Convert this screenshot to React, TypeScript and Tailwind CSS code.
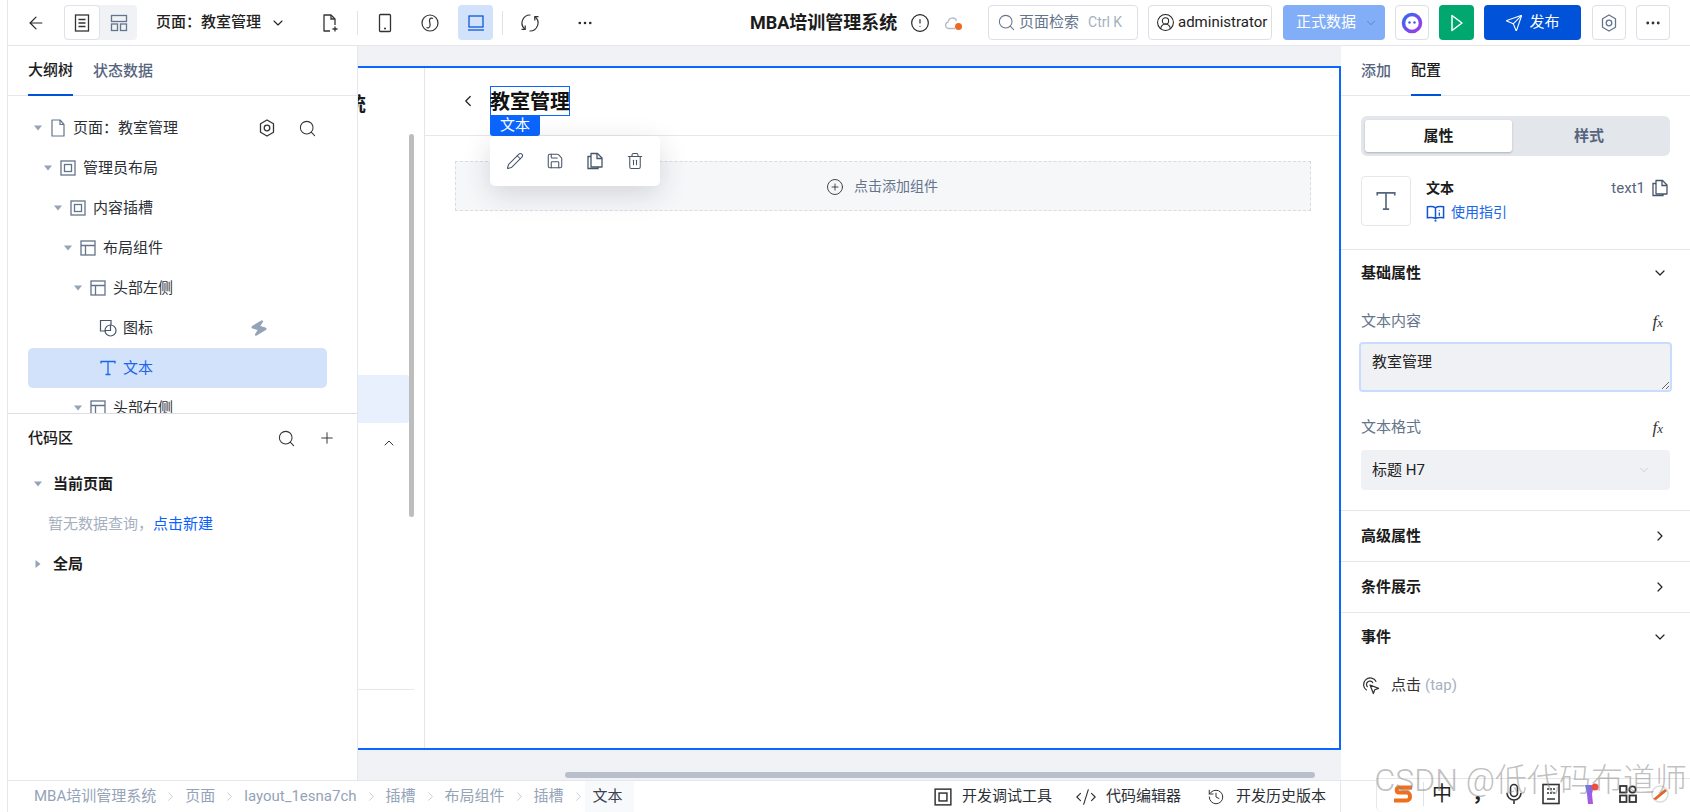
import {
  ArrowLeft,
  ChevronDown,
  ChevronLeft,
  ChevronRight,
  ChevronUp,
  CircleAlert,
  CirclePlus,
  CircleUserRound,
  CodeXml,
  Ellipsis,
  History,
  Pencil,
  Plus,
  Save,
  Search,
  Send,
  Trash2,
  Zap,
} from 'lucide-react'

const fontStack = 'font-[Roboto,"Noto_Sans_CJK_SC",sans-serif]'

function Hex({ className = '' }: { className?: string }) {
  return (
    <svg viewBox="0 0 20 20" fill="none" stroke="currentColor" strokeWidth="1.3" className={className}>
      <path d="M10 2l6.500 3.700v8.600L10 18l-6.500-3.700V5.700z" strokeLinejoin="round" />
      <circle cx="10" cy="10" r="2.800" />
    </svg>
  )
}

function DocIcon({ className = '' }: { className?: string }) {
  return (
    <svg viewBox="0 0 16 18" fill="none" stroke="currentColor" strokeWidth="1.2" className={className}>
      <path d="M2 1h8l4 4.500V17H2z" strokeLinejoin="round" />
      <path d="M10 1v4.500h4" />
    </svg>
  )
}

function CopyIcon({ className = '' }: { className?: string }) {
  return (
    <svg viewBox="0 0 18 18" fill="none" stroke="currentColor" strokeWidth="1.3" className={className}>
      <path d="M5 1.500h6.500L16 6v9H5z" strokeLinejoin="round" />
      <path d="M11 1.500V6.500h5" />
      <path d="M5 4.500H2v12h10V15" />
    </svg>
  )
}

function SlotIcon({ className = '' }: { className?: string }) {
  return (
    <svg viewBox="0 0 16 16" fill="none" stroke="currentColor" strokeWidth="1.3" className={className}>
      <rect x="1" y="1" width="14" height="14" />
      <rect x="4.500" y="4.500" width="7" height="7" />
    </svg>
  )
}

function LayoutIcon({ className = '' }: { className?: string }) {
  return (
    <svg viewBox="0 0 16 16" fill="none" stroke="currentColor" strokeWidth="1.3" className={className}>
      <rect x="1" y="1" width="14" height="14" />
      <path d="M1 5.500h14M5.500 5.500V15" />
    </svg>
  )
}

function ShapeIcon({ className = '' }: { className?: string }) {
  return (
    <svg viewBox="0 0 18 18" fill="none" stroke="currentColor" strokeWidth="1.2" className={className}>
      <path d="M7 12H1.500V1.500H12V6" />
      <circle cx="11.500" cy="11.500" r="5.500" />
      <path d="M6 11.500h5.500V6" />
    </svg>
  )
}

function TIcon({ className = '' }: { className?: string }) {
  return (
    <svg viewBox="0 0 16 16" fill="none" stroke="currentColor" strokeWidth="1.3" className={className}>
      <path d="M1 3.500V1.500h14v2M8 1.500v13M5.500 14.500h5" />
    </svg>
  )
}

function Caret({ open = true }: { open?: boolean }) {
  return (
    <svg viewBox="0 0 8 8" className={`h-[8px] w-[8px] shrink-0 fill-[#94a3b8] ${open ? '' : '-rotate-90'}`}>
      <path d="M0 1.500h8L4 6.500z" />
    </svg>
  )
}

function FxMark() {
  return (
    <span className="mr-[7px] font-['Liberation_Serif'] text-[17px] italic leading-none text-[#333]">
      f<span className="text-[13px]">x</span>
    </span>
  )
}

const treeRows = [
  { label: '页面：教室管理', pad: 'pl-[6px]', icon: 'doc' },
  { label: '管理员布局', pad: 'pl-[16px]', icon: 'slot' },
  { label: '内容插槽', pad: 'pl-[26px]', icon: 'slot' },
  { label: '布局组件', pad: 'pl-[36px]', icon: 'layout' },
  { label: '头部左侧', pad: 'pl-[46px]', icon: 'layout' },
  { label: '图标', pad: 'pl-[71px]', icon: 'shape' },
  { label: '文本', pad: 'pl-[72px]', icon: 'text', active: true },
  { label: '头部右侧', pad: 'pl-[46px]', icon: 'layout' },
]

function TreeIcon({ kind }: { kind: string }) {
  if (kind === 'doc') return <DocIcon className="h-[18px] w-[16px] text-[#64748b]" />
  if (kind === 'slot') return <SlotIcon className="h-[16px] w-[16px] text-[#64748b]" />
  if (kind === 'layout') return <LayoutIcon className="h-[16px] w-[16px] text-[#64748b]" />
  if (kind === 'shape') return <ShapeIcon className="h-[18px] w-[18px] text-[#475569]" />
  return <TIcon className="h-[16px] w-[16px] text-[#1a66e8]" />
}

function TopBar() {
  return (
    <div className="flex h-[46px] shrink-0 items-center border-b border-[#e5e7eb] text-[#222]">
      <ArrowLeft strokeWidth={1.4} className="ml-[18px] h-[20px] w-[20px]" />
      <div className="ml-[18px] flex h-[35px] w-[73px] rounded-[4px] bg-[#f0f2f6]">
        <div className="flex w-[36px] items-center justify-center rounded-[4px] border border-[#dfe2e8] bg-white">
          <svg viewBox="0 0 16 18" fill="none" stroke="#333" strokeWidth="1.3" className="h-[18px] w-[16px]">
            <rect x="1.500" y="1" width="13" height="16" />
            <path d="M4.500 5.500h7M4.500 9h7M4.500 12.500h7" />
          </svg>
        </div>
        <div className="flex flex-1 items-center justify-center">
          <svg viewBox="0 0 18 18" fill="none" stroke="#64748b" strokeWidth="1.3" className="h-[18px] w-[18px]">
            <rect x="1.500" y="1.500" width="15" height="6" />
            <rect x="1.500" y="10" width="6" height="6.500" />
            <rect x="10.500" y="10" width="6" height="6.500" />
          </svg>
        </div>
      </div>
      <span className="ml-[19px] w-[105px] whitespace-nowrap text-[15px] font-medium">页面：教室管理</span>
      <ChevronDown strokeWidth={1.6} className="ml-[9px] h-[16px] w-[16px]" />
      <svg viewBox="0 0 18 20" fill="none" stroke="#333" strokeWidth="1.3" className="ml-[35px] h-[20px] w-[18px]">
        <path d="M9 18H3V2h7l4 4v6" strokeLinejoin="round" />
        <path d="M10 2v4h4M14 13.500v5M11.500 16h5" />
      </svg>
      <div className="ml-[18px] h-[24px] w-px bg-[#dfe2e8]" />
      <svg viewBox="0 0 18 20" fill="none" stroke="#333" strokeWidth="1.3" className="ml-[18px] h-[20px] w-[18px]">
        <rect x="3.500" y="1.500" width="11" height="17" rx="1" />
        <path d="M8 15.500h2" />
      </svg>
      <svg viewBox="0 0 18 18" fill="none" stroke="#333" strokeWidth="1.2" className="ml-[27px] h-[18px] w-[18px]">
        <circle cx="9" cy="9" r="8" />
        <path d="M12 4.500c-2-1-3.500 0-3.500 2 0 2.500 1 3 .5 5.500-.4 1.800-2 2.200-3.500 1.500" />
      </svg>
      <div className="ml-[19px] flex h-[35px] w-[35px] items-center justify-center rounded-[4px] bg-[#d2e2fb]">
        <svg viewBox="0 0 18 18" fill="none" stroke="#0b5ad9" strokeWidth="1.3" className="h-[18px] w-[18px]">
          <rect x="2" y="2" width="14" height="11" />
          <path d="M1 16h16" />
        </svg>
      </div>
      <div className="ml-[9px] h-[24px] w-px bg-[#dfe2e8]" />
      <svg viewBox="0 0 20 20" fill="none" stroke="#333" strokeWidth="1.2" className="ml-[17px] h-[20px] w-[20px]">
        <path d="M10.500 2A8 8 0 0 0 5 16.200M9.500 18A8 8 0 0 0 15 3.800" />
        <path d="M5.200 12.500V16.400H1.500M14.800 7.500V3.600H18.500" />
      </svg>
      <Ellipsis strokeWidth={1.5} className="ml-[36px] h-[18px] w-[18px]" />
      <span className="ml-[156px] w-[146px] whitespace-nowrap text-[18px] font-bold text-[#1b1b1b]">MBA培训管理系统</span>
      <CircleAlert strokeWidth={1.4} className="ml-[14px] h-[20px] w-[20px]" />
      <div className="relative ml-[14px] h-[18px] w-[18px]">
        <svg viewBox="0 0 18 18" fill="none" stroke="#b4bcc8" strokeWidth="1.3" className="h-[18px] w-[18px]">
          <path d="M11 14.500H4.500a3.200 3.200 0 0 1-.5-6.300 4.500 4.500 0 0 1 8.600-1.500" />
        </svg>
        <div className="absolute bottom-[2px] right-[0px] h-[7px] w-[7px] rounded-full bg-[#ed6a24]" />
      </div>
      <div className="ml-[26px] flex h-[35px] w-[150px] items-center rounded-[4px] border border-[#dcdfe6] pl-[8px] text-[15px] text-[#64748b]">
        <Search strokeWidth={1.3} className="h-[19px] w-[19px]" />
        <span className="ml-[3px] whitespace-nowrap">页面检索</span>
        <span className="ml-[9px] whitespace-nowrap text-[14px] text-[#a6b0bf]">Ctrl K</span>
      </div>
      <div className="ml-[10px] flex h-[35px] w-[124px] items-center rounded-[4px] border border-[#dcdfe6] pl-[7px] text-[15px] text-[#222]">
        <CircleUserRound strokeWidth={1.3} className="h-[19px] w-[19px]" />
        <span className="ml-[3px]">administrator</span>
      </div>
      <div className="ml-[11px] flex h-[35px] w-[102px] items-center rounded-[4px] bg-[#82aef7] pl-[13px] text-[15px] text-white">
        正式数据
        <ChevronDown strokeWidth={1.5} className="ml-[8px] h-[14px] w-[14px] text-[#5b7fb8]" />
      </div>
      <div className="ml-[10px] flex h-[35px] w-[34px] items-center justify-center rounded-[4px] border border-[#dcdfe6]">
        <svg viewBox="0 0 22 22" className="h-[22px] w-[22px]">
          <defs>
            <linearGradient id="bot" x1="0" y1="0" x2="1" y2="1">
              <stop offset="0" stopColor="#2f6bf2" />
              <stop offset="1" stopColor="#a638e8" />
            </linearGradient>
          </defs>
          <circle cx="11" cy="11" r="8.500" fill="none" stroke="url(#bot)" strokeWidth="3.500" />
          <circle cx="8.500" cy="10.500" r="1.200" fill="#4057d8" />
          <circle cx="13.500" cy="10.500" r="1.200" fill="#4057d8" />
        </svg>
      </div>
      <div className="ml-[10px] flex h-[35px] w-[35px] items-center justify-center rounded-[4px] bg-[#00a870]">
        <svg viewBox="0 0 14 18" fill="none" stroke="white" strokeWidth="1.5" className="h-[18px] w-[14px]">
          <path d="M2 1.500l10 7.500-10 7.500z" strokeLinejoin="round" />
        </svg>
      </div>
      <div className="ml-[10px] flex h-[35px] w-[97px] items-center justify-center gap-[6px] rounded-[4px] bg-[#0052d9] text-[15px] text-white">
        <Send strokeWidth={1.4} className="h-[18px] w-[18px]" />
        发布
      </div>
      <div className="ml-[11px] flex h-[35px] w-[34px] items-center justify-center rounded-[4px] border border-[#dcdfe6]">
        <Hex className="h-[20px] w-[20px] text-[#64748b]" />
      </div>
      <div className="ml-[10px] flex h-[35px] w-[34px] items-center justify-center rounded-[4px] border border-[#dcdfe6]">
        <Ellipsis strokeWidth={1.8} className="h-[18px] w-[18px] text-[#333]" />
      </div>
    </div>
  )
}

function LeftPanel() {
  return (
    <div className="flex w-[350px] shrink-0 flex-col border-r border-[#e5e7eb]">
      <div className="flex h-[50px] shrink-0 gap-[20px] border-b border-[#e5e7eb] pl-[20px] text-[15px]">
        <div className="-mb-px flex items-center border-b-2 border-[#0052d9] font-medium text-[#1b1b1b]">大纲树</div>
        <div className="-mb-px flex items-center font-medium text-[#56657e]">状态数据</div>
      </div>
      <div className="h-[317px] shrink-0 overflow-hidden px-[20px] pt-[12px]">
        {treeRows.map((row) => (
          <div
            key={row.label}
            className={`flex h-[40px] w-[299px] items-center rounded-[5px] text-[15px] ${row.pad} ${
              row.active ? 'bg-[#d2e2fb] text-[#1a66e8]' : 'text-[#2b2f36]'
            }`}
          >
            {row.icon === 'shape' || row.icon === 'text' ? null : <Caret />}
            <span className={row.icon === 'shape' || row.icon === 'text' ? '' : 'ml-[8px]'}>
              <TreeIcon kind={row.icon} />
            </span>
            <span className={row.icon === 'shape' ? 'ml-[6px]' : 'ml-[7px]'}>{row.label}</span>
            {row.icon === 'doc' && (
              <span className="ml-[79px] flex items-center gap-[21px] text-[#333]">
                <Hex className="h-[20px] w-[20px]" />
                <Search strokeWidth={1.3} className="h-[19px] w-[19px]" />
              </span>
            )}
            {row.icon === 'shape' && (
              <Zap className="ml-[97px] h-[18px] w-[18px] rotate-[15deg] fill-[#94a3b8] text-[#94a3b8]" />
            )}
          </div>
        ))}
      </div>
      <div className="flex-1 border-t border-[#dcdfe6] px-[20px]">
        <div className="flex h-[48px] items-center justify-between pr-[1px] text-[15px] font-medium text-[#1b1b1b]">
          代码区
          <span className="flex items-center gap-[22px] text-[#333]">
            <Search strokeWidth={1.3} className="h-[19px] w-[19px]" />
            <Plus strokeWidth={1.3} className="h-[18px] w-[18px]" />
          </span>
        </div>
        <div className="mt-[2px] flex h-[40px] items-center pl-[6px] text-[15px] font-bold text-[#1b1b1b]">
          <Caret />
          <span className="ml-[11px]">当前页面</span>
        </div>
        <div className="flex h-[40px] items-center pl-[20px] text-[15px] text-[#a6b0bf]">
          暂无数据查询，<span className="text-[#0a5fff]">点击新建</span>
        </div>
        <div className="flex h-[40px] items-center pl-[6px] text-[15px] font-bold text-[#1b1b1b]">
          <Caret open={false} />
          <span className="ml-[11px]">全局</span>
        </div>
      </div>
    </div>
  )
}

function Canvas() {
  return (
    <div className="flex w-[983px] shrink-0 flex-col bg-[#f0f2f6] pt-[20px]">
      <div className="flex h-[684px] shrink-0 border-y-2 border-r-2 border-[#0a66ff] bg-white">
        <div className="relative w-[67px] shrink-0 overflow-hidden border-r border-[#e5e5e5]">
          <div className="mt-[25px] h-[24px] w-[8px] overflow-hidden">
            <div className="-ml-[12px] text-[20px] font-bold leading-[24px] text-[#1b1b1b]">统</div>
          </div>
          <div className="mt-[258px] h-[48px] w-[51px] rounded-r-[3px] bg-[#e8effd]" />
          <div className="mt-[12px] flex w-[56px] justify-end pr-[17px]">
            <ChevronUp strokeWidth={1.5} className="h-[16px] w-[16px] text-[#333]" />
          </div>
          <div className="mt-[238px] w-[56px] border-t border-[#e5e7eb]" />
          <div className="absolute left-[51px] top-[66px] h-[383px] w-[5px] rounded-full bg-[#bdbdbd]" />
        </div>
        <div className="flex-1">
          <div className="flex h-[68px] items-center border-b border-[#e5e7eb] pb-[2px] pl-[34px]">
            <ChevronLeft strokeWidth={1.6} className="h-[18px] w-[18px] text-[#222]" />
            <div className="relative ml-[13px] flex h-[30px] w-[80px] items-center justify-center whitespace-nowrap border border-[#0a66ff] text-[20px] font-bold text-[#111]">
              <span className="translate-y-[1px]">教室管理</span>
              <div className="absolute -left-px top-[29px] z-10 flex h-[20px] w-[50px] items-center justify-center rounded-b-[3px] bg-[#0a66ff] text-[15px] font-normal text-white">
                文本
              </div>
              <div className="absolute -left-px top-[49px] z-10 flex h-[50px] w-[170px] items-center gap-[22px] rounded-[5px] bg-white pl-[16px] text-[#475569] shadow-[0_8px_28px_rgba(30,40,60,0.16)]">
                <Pencil strokeWidth={1.4} className="h-[18px] w-[18px]" />
                <Save strokeWidth={1.4} className="h-[18px] w-[18px]" />
                <CopyIcon className="h-[18px] w-[18px]" />
                <Trash2 strokeWidth={1.4} className="h-[18px] w-[18px]" />
              </div>
            </div>
          </div>
          <div className="ml-[30px] mr-[28px] mt-[25px] flex h-[50px] items-center justify-center gap-[10px] border border-dashed border-[#dcdcdc] bg-[#f6f7f9] pr-[2px] pt-[1px] text-[14px] text-[#64748b]">
            <CirclePlus strokeWidth={1.2} className="h-[18px] w-[18px] text-[#333]" />
            点击添加组件
          </div>
        </div>
      </div>
      <div className="flex h-[30px] items-end pb-[2px] pl-[207px]">
        <div className="h-[6px] w-[750px] rounded-full bg-[#b8bfca]" />
      </div>
    </div>
  )
}

function SectionHeader({ label, open }: { label: string; open?: boolean }) {
  return (
    <div className="flex h-[46px] items-center justify-between px-[20px] text-[15px] font-bold text-[#1b1b1b]">
      {label}
      {open ? (
        <ChevronDown strokeWidth={1.8} className="mr-[2px] h-[16px] w-[16px] text-[#222]" />
      ) : (
        <ChevronRight strokeWidth={1.8} className="mr-[2px] h-[16px] w-[16px] text-[#222]" />
      )}
    </div>
  )
}

function RightPanel() {
  return (
    <div className="flex w-[349px] shrink-0 flex-col">
      <div className="flex h-[50px] shrink-0 gap-[20px] border-b border-[#e5e7eb] pl-[20px] text-[15px] font-medium">
        <div className="-mb-px flex items-center text-[#56657e]">添加</div>
        <div className="-mb-px flex items-center border-b-2 border-[#0052d9] text-[#1b1b1b]">配置</div>
      </div>
      <div className="border-b border-[#e5e7eb] px-[20px] pb-[23px] pt-[20px]">
        <div className="flex h-[40px] w-[309px] rounded-[6px] bg-[#e3e6ea] p-[4px] text-[15px] font-bold">
          <div className="flex w-[147px] items-center justify-center rounded-[3px] bg-white text-[#1b1b1b] shadow-[0_1px_2px_rgba(50,60,80,0.3)]">
            属性
          </div>
          <div className="flex flex-1 items-center justify-center text-[#56657e]">样式</div>
        </div>
        <div className="mt-[20px] flex h-[50px]">
          <div className="flex h-[50px] w-[50px] items-center justify-center rounded-[4px] border border-[#e5e7eb]">
            <TIcon className="h-[20px] w-[20px] text-[#56657e]" />
          </div>
          <div className="ml-[15px] flex-1">
            <div className="flex items-center justify-between">
              <span className="text-[14px] font-bold leading-[24px] text-[#1b1b1b]">文本</span>
              <span className="flex items-center text-[15px] text-[#56657e]">
                text1
                <CopyIcon className="ml-[6px] mr-[1px] h-[18px] w-[18px] text-[#475569]" />
              </span>
            </div>
            <div className="mt-[2px] flex items-center text-[14px] text-[#1a66e8]">
              <svg viewBox="0 0 20 18" className="h-[18px] w-[19px]" fill="none" stroke="#1256cf" strokeWidth="1.6">
                <path d="M10 3.500C8 2 5 2 1.500 2.500v11.500c3.500-.5 6.500-.5 8.500 1 2-1.500 5-1.500 8.500-1V2.500C15 2 12 2 10 3.500zM10 3.500V15" />
                <path d="M14 6v.8M14 8.500v3.500" strokeWidth="1.400" />
                <path d="M9 17.200h2" />
              </svg>
              <span className="ml-[6px]">使用指引</span>
            </div>
          </div>
        </div>
      </div>
      <div className="border-b border-[#e5e7eb] pb-[20px]">
        <SectionHeader label="基础属性" open />
        <div className="mt-[15px] flex h-[20px] items-center justify-between px-[20px] text-[15px] text-[#64748b]">
          文本内容
          <FxMark />
        </div>
        <textarea
          readOnly
          defaultValue="教室管理"
          className="mx-[18px] mt-[11px] block h-[50px] w-[313px] resize-y rounded-[4px] border-2 border-[#c9dcfb] bg-[#f0f1f5] px-[11px] py-[7px] text-[15px] text-[#222] outline-none"
        />
        <div className="mt-[25px] flex h-[20px] items-center justify-between px-[20px] text-[15px] text-[#64748b]">
          文本格式
          <FxMark />
        </div>
        <div className="mx-[20px] mt-[13px] flex h-[40px] items-center justify-between rounded-[4px] bg-[#f0f1f5] pl-[11px] pr-[19px] text-[15px] text-[#222]">
          标题 H7
          <ChevronDown strokeWidth={1.3} className="h-[14px] w-[14px] text-[#c0c6d0]" />
        </div>
      </div>
      <div className="border-b border-[#e5e7eb] pb-[2px] pt-[2px]">
        <SectionHeader label="高级属性" />
      </div>
      <div className="border-b border-[#e5e7eb] py-[2px]">
        <SectionHeader label="条件展示" />
      </div>
      <div className="mt-[1px]">
        <SectionHeader label="事件" open />
      </div>
      <div className="mt-[15px] flex h-[20px] items-center pl-[20px] text-[15px] text-[#333]">
        <svg viewBox="0 0 20 20" fill="none" stroke="#333" strokeWidth="1.3" className="h-[19px] w-[19px]">
          <path d="M6 15a7 7 0 1 1 10-9" />
          <path d="M7 11.500a3.500 3.500 0 1 1 5.500-4" />
          <path d="M9.500 9.500l9 3.500-4 1.500-1.500 4z" strokeLinejoin="round" />
        </svg>
        <span className="ml-[11px]">点击</span>
        <span className="ml-[4px] text-[#a6b0bf]">(tap)</span>
      </div>
    </div>
  )
}

const crumbs = ['MBA培训管理系统', '页面', 'layout_1esna7ch', '插槽', '布局组件', '插槽']

function BottomBar() {
  return (
    <div className="flex h-[32px] shrink-0 items-center border-t border-[#e5e7eb] pl-[26px] text-[15px]">
      {crumbs.map((c, i) => (
        <span key={i} className="flex items-center whitespace-nowrap text-[#94a3b8]">
          {c}
          <ChevronRight strokeWidth={1.2} className="mx-[7px] h-[15px] w-[15px] text-[#b4bcc8]" />
        </span>
      ))}
      <span className="ml-[-8px] flex h-full items-center bg-[#f8f9fb] pl-[8px] pr-[11px] text-[#3a4250]">文本</span>
      <div className="ml-auto flex items-center whitespace-nowrap pr-[14px] text-[#2b2f36]">
        <SlotIcon className="h-[18px] w-[18px] text-[#333]" />
        <span className="ml-[10px]">开发调试工具</span>
        <CodeXml strokeWidth={1.2} className="ml-[23px] h-[22px] w-[22px]" />
        <span className="ml-[9px]">代码编辑器</span>
        <History strokeWidth={1.3} className="ml-[26px] h-[18px] w-[18px]" />
        <span className="ml-[11px]">开发历史版本</span>
      </div>
      <div className="h-full w-[350px] border-l border-[#e5e7eb]" />
    </div>
  )
}

function ImeBar() {
  return (
    <div className="absolute bottom-0 right-0 flex h-[34px] w-[314px] items-center rounded-bl-[6px] border-l border-t border-[#e5e7eb] bg-white pb-[3px] text-[#222]">
      <svg viewBox="0 0 22 20" fill="none" stroke="#ee6f1c" strokeWidth="4" className="ml-[15px] h-[20px] w-[22px]">
        <path d="M20 3.500H7c-3 0-3 5 0 5h8c4 0 4 8 0 8H2" />
      </svg>
      <div className="ml-[9px] h-[24px] w-px bg-[#dfe2e8]" />
      <span className="ml-[8px] text-[20px] leading-none">中</span>
      <span className="ml-[20px] text-[20px] font-bold leading-none">，</span>
      <svg viewBox="0 0 18 22" fill="none" stroke="#333" strokeWidth="1.6" className="ml-[13px] h-[22px] w-[18px]">
        <rect x="5.500" y="1.500" width="7" height="12" rx="3.500" />
        <path d="M2 10a7 7 0 0 0 14 0M9 17v4" />
      </svg>
      <svg viewBox="0 0 18 22" fill="none" stroke="#333" strokeWidth="1.6" className="ml-[19px] h-[22px] w-[18px]">
        <rect x="1" y="1.500" width="16" height="19" />
        <path d="M5 16h8M5 6h2M8 6h2M11 6h2M5 10h2M8 10h2M11 10h2" />
      </svg>
      <svg viewBox="0 0 20 24" className="ml-[20px] h-[24px] w-[20px]">
        <defs>
          <linearGradient id="ime" x1="0" y1="0" x2="1" y2="1">
            <stop offset="0" stopColor="#5b7cf5" />
            <stop offset="1" stopColor="#c64ad8" />
          </linearGradient>
        </defs>
        <path d="M5 3h9l-2 9 1 10H8l-1-10z" fill="url(#ime)" />
        <circle cx="15" cy="5" r="3.500" fill="#ee4f3c" />
      </svg>
      <svg viewBox="0 0 18 18" fill="none" stroke="#333" strokeWidth="1.8" className="ml-[19px] h-[18px] w-[18px]">
        <rect x="1" y="1" width="6.500" height="6.500" />
        <circle cx="13.500" cy="4.500" r="3.200" />
        <rect x="1" y="10.500" width="6.500" height="6.500" />
        <rect x="10.500" y="10.500" width="6.500" height="6.500" />
      </svg>
      <svg viewBox="0 0 20 20" className="ml-[13px] h-[20px] w-[20px]">
        <circle cx="10" cy="10" r="8" fill="none" stroke="#ddd" strokeWidth="1.500" />
        <path d="M3 15L15 5l2 2L6 16z" fill="#e0652a" />
      </svg>
    </div>
  )
}

export default function App() {
  return (
    <div className={`relative flex h-[812px] w-[1690px] overflow-hidden bg-white ${fontStack}`}>
      <div className="w-[8px] shrink-0 border-r border-[#e5e7eb]" />
      <div className="flex w-[1682px] flex-col">
        <TopBar />
        <div className="flex h-[734px] shrink-0">
          <LeftPanel />
          <Canvas />
          <RightPanel />
        </div>
        <BottomBar />
      </div>
      <ImeBar />
      <div className="pointer-events-none absolute bottom-[16px] right-[3px] whitespace-nowrap text-[32px] font-light leading-none text-[rgba(140,140,140,0.55)]">
        CSDN @低代码布道师
      </div>
    </div>
  )
}
